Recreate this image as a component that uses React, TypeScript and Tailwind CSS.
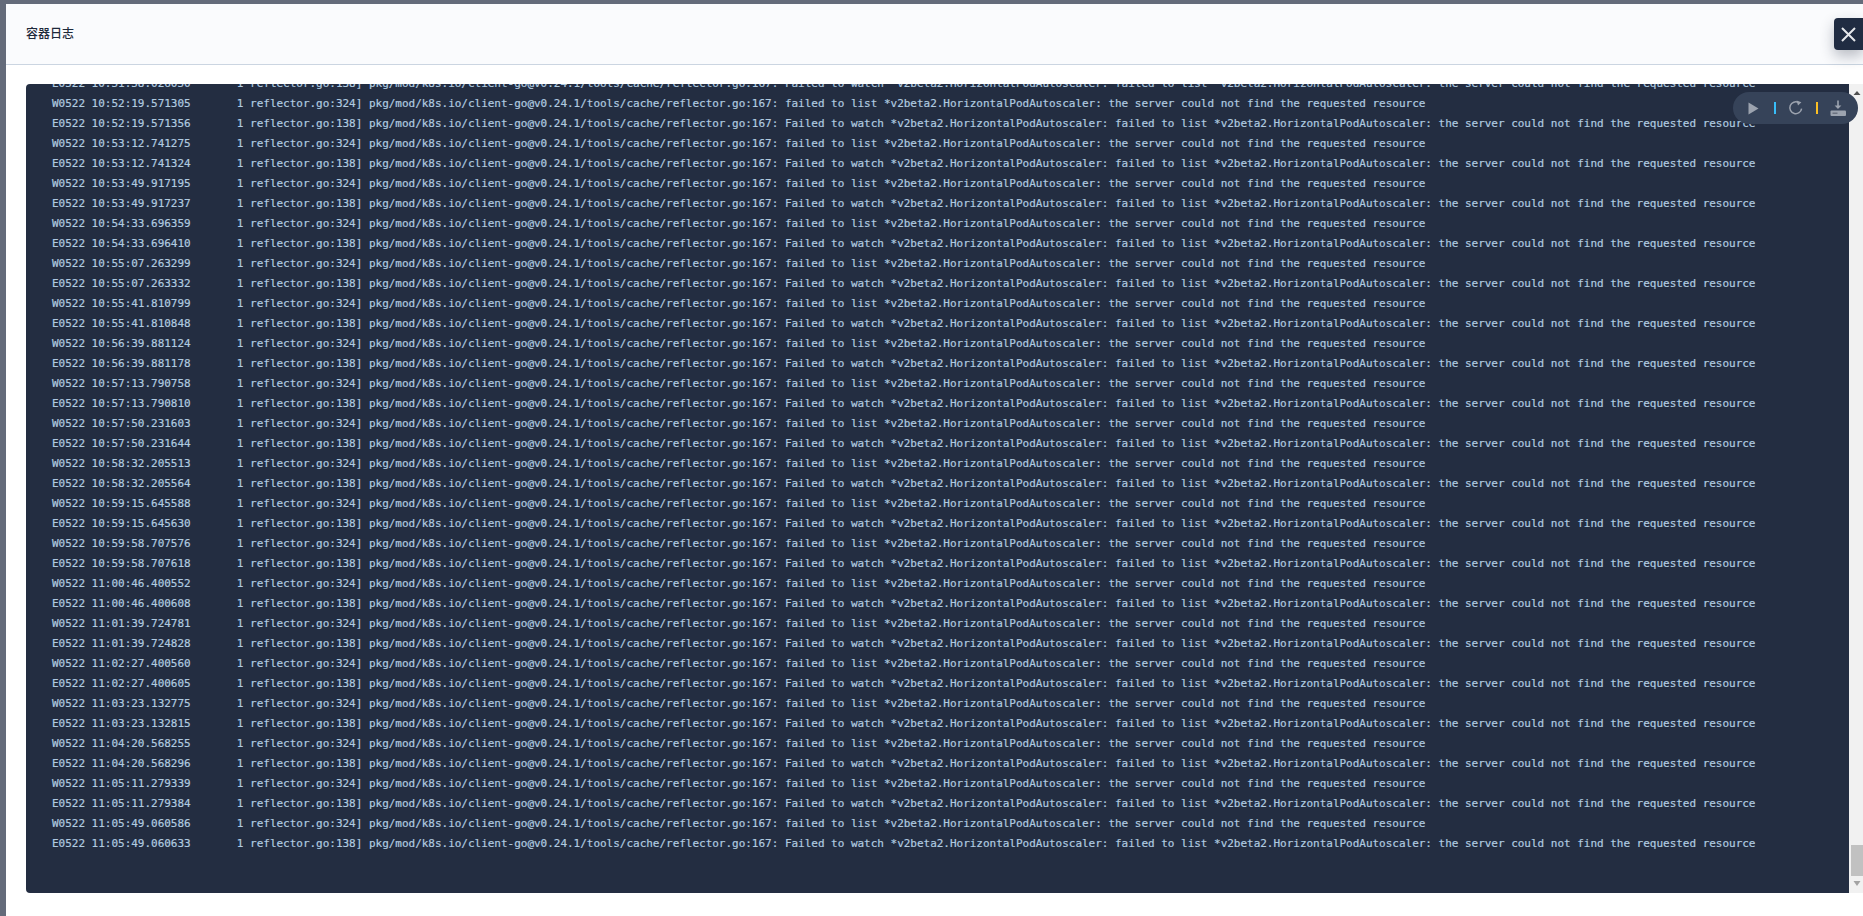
const stamps = [
  "10:52:19.571305", "10:52:19.571356", "10:53:12.741275", "10:53:12.741324",
  "10:53:49.917195", "10:53:49.917237", "10:54:33.696359", "10:54:33.696410",
  "10:55:07.263299", "10:55:07.263332", "10:55:41.810799", "10:55:41.810848",
  "10:56:39.881124", "10:56:39.881178", "10:57:13.790758", "10:57:13.790810",
  "10:57:50.231603", "10:57:50.231644", "10:58:32.205513", "10:58:32.205564",
  "10:59:15.645588", "10:59:15.645630", "10:59:58.707576", "10:59:58.707618",
  "11:00:46.400552", "11:00:46.400608", "11:01:39.724781", "11:01:39.724828",
  "11:02:27.400560", "11:02:27.400605", "11:03:23.132775", "11:03:23.132815",
  "11:04:20.568255", "11:04:20.568296", "11:05:11.279339", "11:05:11.279384",
  "11:05:49.060586", "11:05:49.060633",
];

const prefix = "pkg/mod/k8s.io/client-go@v0.24.1/tools/cache/reflector.go:167:";
const reason = "the server could not find the requested resource";

const warnLine = (time: string) =>
  `W0522 ${time}       1 reflector.go:324] ${prefix} failed to list *v2beta2.HorizontalPodAutoscaler: ${reason}`;
const errorLine = (time: string) =>
  `E0522 ${time}       1 reflector.go:138] ${prefix} Failed to watch *v2beta2.HorizontalPodAutoscaler: failed to list *v2beta2.HorizontalPodAutoscaler: ${reason}`;

const lines = [
  errorLine("10:51:58.026050"),
  ...stamps.map((time, i) => (i % 2 === 0 ? warnLine(time) : errorLine(time))),
];

const Toolbar = () => {
  return (
    <div className="absolute right-[5px] top-[27px] flex h-8 w-[125px] items-center rounded-full bg-[#364359] pl-[15px]">
      <svg width="11" height="13" viewBox="0 0 11 13" className="shrink-0">
        <path d="M0.5 0.5 L10.5 6.5 L0.5 12.5 Z" fill="#9ca3af" />
      </svg>
      <span className="ml-[15px] h-3 w-0.5 shrink-0 bg-[#38bdf8]" />
      <svg width="16" height="16" viewBox="0 0 16 16" fill="none" className="ml-[12px] shrink-0">
        <path d="M13.6 8.6 A5.9 5.9 0 1 1 10.6 2.6" stroke="#9ca3af" strokeWidth="1.5" />
        <path d="M8.6 0.4 L13.4 2.2 L10 5.6 Z" fill="#9ca3af" />
      </svg>
      <span className="ml-[12px] h-3 w-0.5 shrink-0 bg-[#fbbf24]" />
      <svg width="16" height="16" viewBox="0 0 16 16" className="ml-[12px] shrink-0">
        <path d="M7.2 0.5 H8.8 V5.5 H11.4 L8 9 L4.6 5.5 H7.2 Z" fill="#9ca3af" />
        <rect x="0.5" y="10.5" width="15.5" height="5.5" rx="1" fill="#9ca3af" />
        <rect x="2.5" y="12.5" width="5" height="1.5" fill="#6b7280" />
      </svg>
    </div>
  );
};

const Scrollbar = () => {
  return (
    <div className="flex w-[14px] shrink-0 flex-col items-end bg-[#f1f1f1]">
      <svg width="12" height="16" viewBox="0 0 12 16" className="shrink-0">
        <path d="M2.5 11 L6 7 L9.5 11 Z" fill="#505050" />
      </svg>
      <div className="mt-auto h-[31px] w-3 bg-[#c1c1c1]" />
      <svg width="12" height="17" viewBox="0 0 12 17" className="shrink-0">
        <path d="M2.5 5 L6 10 L9.5 5 Z" fill="#a3a3a3" />
      </svg>
    </div>
  );
};

export default function App() {
  return (
    <div className="h-[916px] w-full overflow-hidden bg-[#646b7a] pl-1.5 pt-1">
      <div className="relative flex h-[912px] flex-col rounded-tl bg-white">
        <header className="flex h-[61px] shrink-0 items-center border-b border-[#cbd5e1] bg-[#fafbfd] pb-0.5 pl-5">
          <h1 className="font-['Noto_Sans_CJK_SC',sans-serif] text-xs font-medium text-[#1e293b]">容器日志</h1>
        </header>
        <button className="absolute right-0 top-3.5 flex h-8 w-[29px] items-center justify-center rounded-l bg-[#202c42] shadow-[0_6px_14px_rgba(30,41,59,0.3)]">
          <svg width="15" height="15" viewBox="0 0 15 15" fill="none" stroke="#e5e7eb" strokeWidth="2">
            <path d="M1 1 L14 14 M14 1 L1 14" />
          </svg>
        </button>
        <main className="relative flex min-h-0 flex-1 pl-5 pt-[19px] pb-[23px]">
          <div className="flex min-w-0 flex-1 overflow-hidden rounded-l bg-[#232d41]">
            <div className="-mt-[10px] min-w-0 flex-1 whitespace-pre pl-[26px] font-['DejaVu_Sans_Mono',monospace] text-[11px] leading-5 tracking-[-0.02px] text-[#b2cce2] [-webkit-text-stroke:0.2px_#abc7de]">
              {lines.map((line) => (
                <div key={line}>{line}</div>
              ))}
            </div>
          </div>
          <Scrollbar />
          <Toolbar />
        </main>
      </div>
    </div>
  );
}
